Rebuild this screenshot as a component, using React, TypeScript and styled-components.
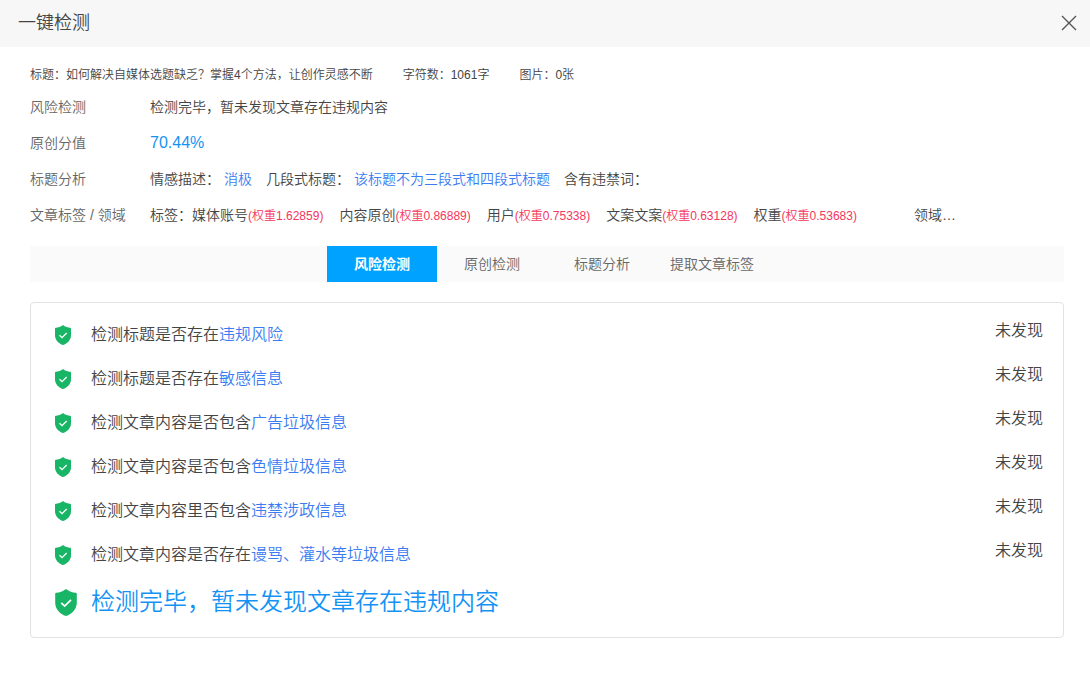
import React, { useState } from "react";
import styled, { createGlobalStyle } from "styled-components";

const GlobalStyle = createGlobalStyle`
  * { box-sizing: border-box; }
  body {
    margin: 0;
    background: #fff;
    color: #444;
    font-family: "Liberation Sans", "Noto Sans CJK SC", sans-serif;
    font-size: 14px;
    font-weight: 350;
  }
  button { font: inherit; border: 0; padding: 0; cursor: pointer; }
`;

const Header = styled.header`
  display: flex;
  align-items: center;
  justify-content: space-between;
  height: 47px;
  padding: 0 13px 2px 18px;
  background: #f7f7f7;
`;

const Title = styled.h1`
  margin: 0;
  font-size: 18px;
  font-weight: 350;
  line-height: 44px;
`;

const CloseButton = styled.button`
  display: flex;
  background: none;
  color: #555;
`;

const Content = styled.main`
  padding: 15px 26px 36px 30px;
`;

const Meta = styled.div`
  display: flex;
  flex-wrap: wrap;
  gap: 0 30px;
  font-size: 12px;
  line-height: 27px;
`;

const Details = styled.dl`
  margin: 0 0 12px;
  line-height: 36px;
`;

const DetailRow = styled.div`
  display: flex;
`;

const DetailLabel = styled.dt`
  flex: 0 0 120px;
  color: #666;
`;

const DetailValue = styled.dd<{ $gap?: number }>`
  display: flex;
  flex: 1;
  gap: ${(p) => p.$gap ?? 0}px;
  min-width: 0;
  margin: 0;
  white-space: nowrap;
`;

const Score = styled.span`
  color: #1593f5;
  font-size: 16px;
`;

const Highlight = styled.span<{ $spaced?: boolean }>`
  margin-left: ${(p) => (p.$spaced ? 4 : 0)}px;
  color: #3b7cf0;
`;

const Tags = styled.span`
  display: flex;
  gap: 16px;
  margin-right: 57px;
`;

const Weight = styled.span`
  color: #f5365c;
  font-size: 12px;
`;

const TabBar = styled.div`
  display: flex;
  justify-content: center;
  background: #fafafa;
`;

const Tab = styled.button<{ $active: boolean }>`
  width: 110px;
  height: 36px;
  padding-bottom: 2px;
  background: ${(p) => (p.$active ? "#00a2ff" : "transparent")};
  color: ${(p) => (p.$active ? "#fff" : "#666")};
  font-weight: ${(p) => (p.$active ? 700 : 350)};
`;

const Card = styled.section`
  margin-top: 20px;
  padding: 10px 20px 10px 24px;
  border: 1px solid #e2e2e2;
  border-radius: 4px;
  font-size: 16px;
`;

const CheckList = styled.ul`
  margin: 0;
  padding: 0;
  list-style: none;
`;

const CheckRow = styled.li`
  display: flex;
  align-items: flex-start;
  height: 44px;
  line-height: 44px;
`;

const IconCell = styled.span`
  display: flex;
  flex: 0 0 36px;
  align-self: center;
`;

const Status = styled.span`
  margin-left: auto;
  line-height: 36px;
`;

const Summary = styled.p`
  display: flex;
  margin: 0;
  color: #1593f5;
  font-size: 24px;
  line-height: 50px;
`;

function Shield({ width, height }: { width: number; height: number }) {
  return (
    <svg width={width} height={height} viewBox="0 0 16 20" aria-hidden="true">
      <path
        d="M8 0C10.2 1.7 12.8 2.6 15.2 2.8Q16 2.9 16 3.7V10.2C16 15 12.4 18.600 8 20C3.600 18.600 0 15 0 10.200V3.700Q0 2.900.8 2.800C3.200 2.600 5.800 1.700 8 0Z"
        fill="#18b566"
      />
      <path d="M4.500 10.300L7 12.700L11.700 8" fill="none" stroke="#fff" strokeWidth="1.300" />
    </svg>
  );
}

const tags = [
  ["媒体账号", "1.62859"],
  ["内容原创", "0.86889"],
  ["用户", "0.75338"],
  ["文案文案", "0.63128"],
  ["权重", "0.53683"],
];

const tabs = ["风险检测", "原创检测", "标题分析", "提取文章标签"];

const checks = [
  ["检测标题是否存在", "违规风险"],
  ["检测标题是否存在", "敏感信息"],
  ["检测文章内容是否包含", "广告垃圾信息"],
  ["检测文章内容是否包含", "色情垃圾信息"],
  ["检测文章内容里否包含", "违禁涉政信息"],
  ["检测文章内容是否存在", "谩骂、灌水等垃圾信息"],
];

export default function App() {
  const [active, setActive] = useState(0);
  return (
    <div lang="zh-CN">
      <GlobalStyle />
      <Header>
        <Title>一键检测</Title>
        <CloseButton type="button" aria-label="关闭">
          <svg width="16" height="16" viewBox="0 0 16 16" aria-hidden="true">
            <path d="M1 1L15 15M15 1L1 15" fill="none" stroke="currentColor" strokeWidth="1.400" />
          </svg>
        </CloseButton>
      </Header>
      <Content>
        <Meta>
          <span>标题：如何解决自媒体选题缺乏？掌握4个方法，让创作灵感不断</span>
          <span>字符数：1061字</span>
          <span>图片：0张</span>
        </Meta>
        <Details>
          <DetailRow>
            <DetailLabel>风险检测</DetailLabel>
            <DetailValue>检测完毕，暂未发现文章存在违规内容</DetailValue>
          </DetailRow>
          <DetailRow>
            <DetailLabel>原创分值</DetailLabel>
            <DetailValue>
              <Score>70.44%</Score>
            </DetailValue>
          </DetailRow>
          <DetailRow>
            <DetailLabel>标题分析</DetailLabel>
            <DetailValue $gap={14}>
              <span>
                情感描述：<Highlight $spaced>消极</Highlight>
              </span>
              <span>
                几段式标题：<Highlight $spaced>该标题不为三段式和四段式标题</Highlight>
              </span>
              <span>含有违禁词：</span>
            </DetailValue>
          </DetailRow>
          <DetailRow>
            <DetailLabel>文章标签 / 领域</DetailLabel>
            <DetailValue>
              <span>标签：</span>
              <Tags>
                {tags.map(([name, weight]) => (
                  <span key={name}>
                    {name}
                    <Weight>(权重{weight})</Weight>
                  </span>
                ))}
              </Tags>
              <span>领域…</span>
            </DetailValue>
          </DetailRow>
        </Details>
        <TabBar role="tablist">
          {tabs.map((label, i) => (
            <Tab
              key={label}
              type="button"
              role="tab"
              aria-selected={i === active}
              $active={i === active}
              onClick={() => setActive(i)}
            >
              {label}
            </Tab>
          ))}
        </TabBar>
        <Card>
          <CheckList>
            {checks.map(([text, subject]) => (
              <CheckRow key={text + subject}>
                <IconCell>
                  <Shield width={16} height={20} />
                </IconCell>
                <span>
                  {text}
                  <Highlight>{subject}</Highlight>
                </span>
                <Status>未发现</Status>
              </CheckRow>
            ))}
          </CheckList>
          <Summary>
            <IconCell>
              <Shield width={22} height={27} />
            </IconCell>
            检测完毕，暂未发现文章存在违规内容
          </Summary>
        </Card>
      </Content>
    </div>
  );
}
